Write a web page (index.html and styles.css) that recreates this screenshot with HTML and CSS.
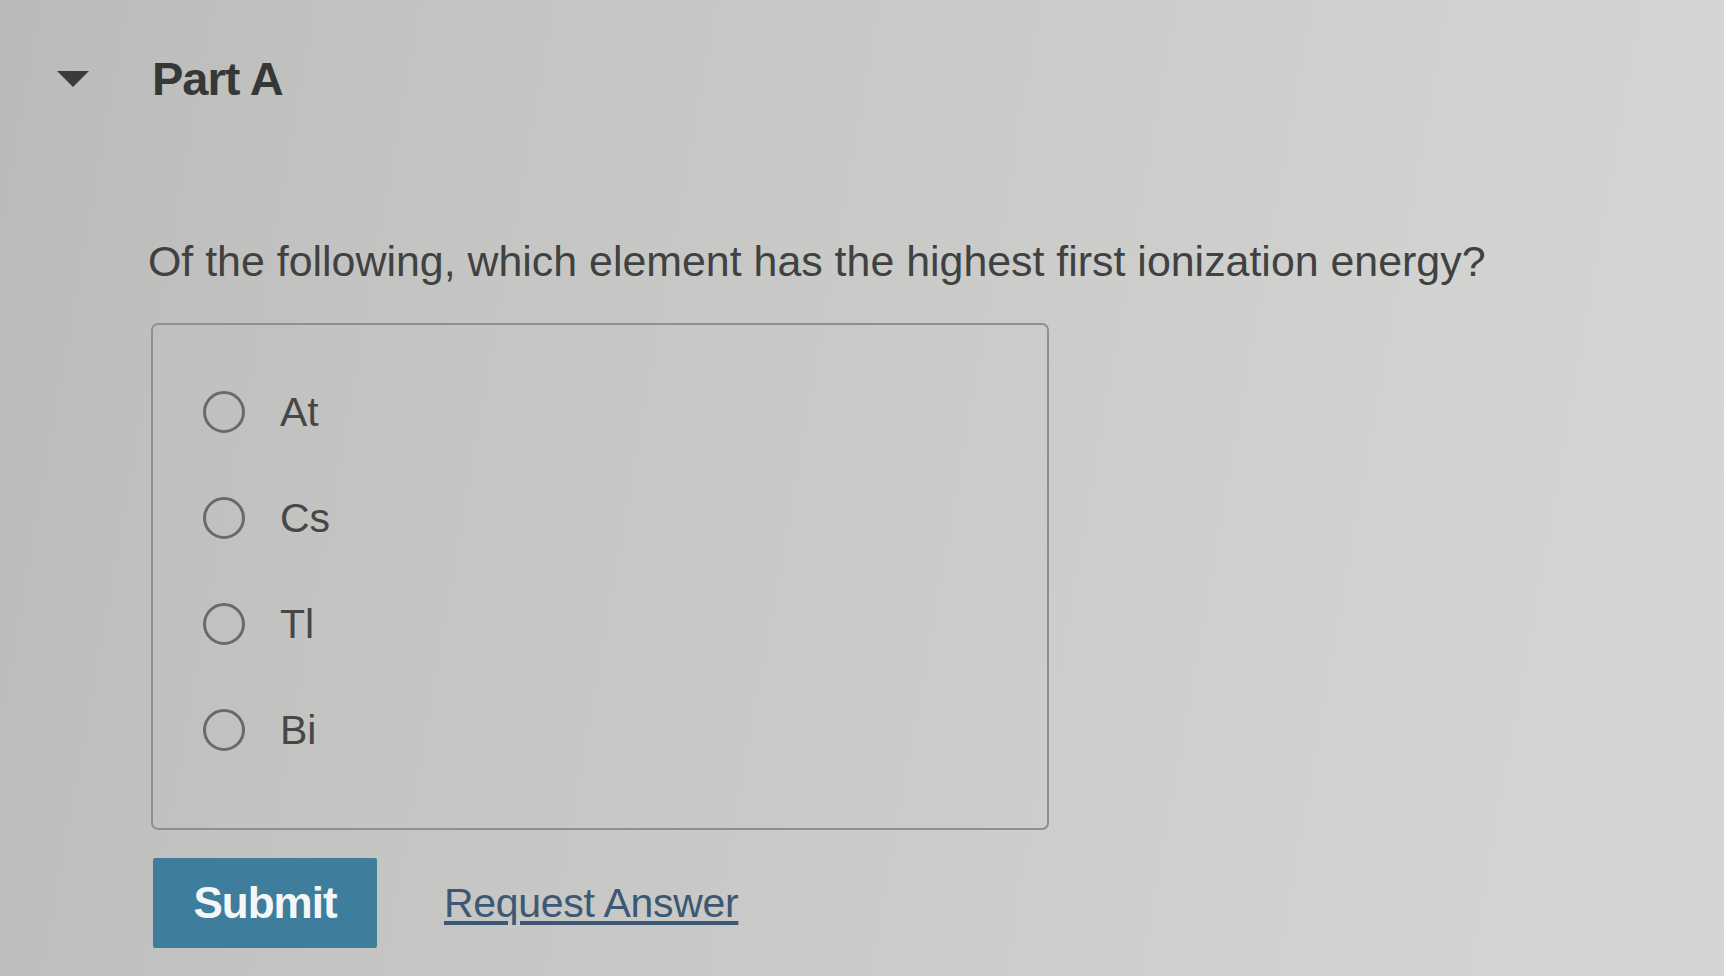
FILE: index.html
```html
<!DOCTYPE html>
<html lang="en">
<head>
<meta charset="utf-8">
<title>Part A</title>
<link rel="stylesheet" href="styles.css">
</head>
<body>
<div class="page">
  <div class="part-header">
    <span class="caret" aria-hidden="true"></span>
    <h2 class="part-title">Part A</h2>
  </div>
  <p class="question">Of the following, which element has the highest first ionization energy?</p>
  <div class="choices">
    <label class="choice"><span class="radio"></span><span class="choice-text">At</span></label>
    <label class="choice"><span class="radio"></span><span class="choice-text">Cs</span></label>
    <label class="choice"><span class="radio"></span><span class="choice-text">Tl</span></label>
    <label class="choice"><span class="radio"></span><span class="choice-text">Bi</span></label>
  </div>
  <div class="actions">
    <button class="submit" type="button">Submit</button>
    <a class="request" href="#">Request Answer</a>
  </div>
</div>
</body>
</html>
```
FILE: styles.css
```css
html, body {
  margin: 0;
  height: 100%;
}
body {
  font-family: "Liberation Sans", Arial, sans-serif;
  background: linear-gradient(100deg, #bababa 0%, #c4c5c3 25%, #cbcbca 55%, #d2d2d1 80%, #d5d5d4 100%);
  overflow: hidden;
}
.page {
  width: 1724px;
  height: 976px;
  box-sizing: border-box;
  padding-top: 49px;
}
.part-header {
  display: flex;
  align-items: center;
  height: 60px;
  padding-left: 57px;
}
.caret {
  width: 0;
  height: 0;
  border-left: 16px solid transparent;
  border-right: 16px solid transparent;
  border-top: 16px solid #3a3c3c;
}
.part-title {
  margin: 0 0 0 63px;
  font-size: 47px;
  font-weight: bold;
  letter-spacing: -1px;
  color: #363737;
  line-height: 60px;
}
.question {
  margin: 127px 0 0 148px;
  font-size: 42.9px;
  line-height: 50px;
  color: #404141;
}
.choices {
  margin: 37px 0 0 151px;
  width: 898px;
  height: 507px;
  box-sizing: border-box;
  border: 2px solid #8f908e;
  border-radius: 7px;
  padding: 34px 0 0 50px;
  display: flex;
  flex-direction: column;
}
.choice {
  display: flex;
  align-items: center;
  height: 106px;
  gap: 35px;
}
.radio {
  width: 42px;
  height: 42px;
  box-sizing: border-box;
  border: 3px solid #696a69;
  border-radius: 50%;
}
.choice-text {
  font-size: 41px;
  color: #464747;
}
.actions {
  display: flex;
  align-items: center;
  margin: 28px 0 0 153px;
  gap: 67px;
}
.submit {
  width: 224px;
  height: 90px;
  border: 0;
  border-radius: 2px;
  background: #3e7d9c;
  color: #f4f6f7;
  font-family: "Liberation Sans", Arial, sans-serif;
  font-size: 44px;
  font-weight: bold;
  letter-spacing: -1px;
  padding: 0;
}
.request {
  font-size: 41px;
  color: #3c5872;
  text-decoration: underline;
  text-underline-offset: 4px;
  letter-spacing: -0.3px;
}
```
